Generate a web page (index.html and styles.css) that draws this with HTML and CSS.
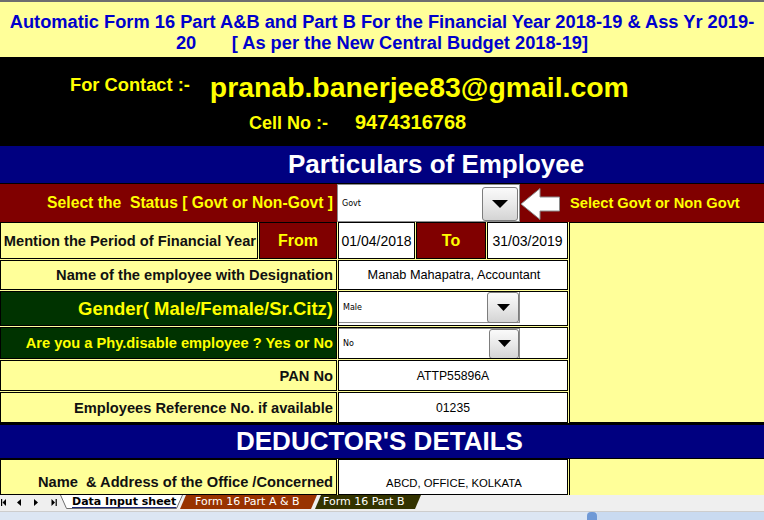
FILE: index.html
```html
<!DOCTYPE html>
<html lang="en">
<head>
<meta charset="utf-8">
<title>Form 16 - Data Input sheet</title>
<link rel="stylesheet" href="styles.css">
</head>
<body>
<div class="sheet">
  <header class="title">Automatic Form 16 Part A&amp;B and Part B For the Financial Year 2018-19 &amp; Ass Yr 2019-
20       [ As per the New Central Budget 2018-19]</header>

  <section class="contact">
    <div class="contact-line contact-line1">
      <span class="c-label">For Contact :-</span>
      <span class="c-email">pranab.banerjee83@gmail.com</span>
    </div>
    <div class="contact-line contact-line2">
      <span class="c-cell">Cell No :-</span>
      <span class="c-phone">9474316768</span>
    </div>
  </section>

  <div class="band band-particulars">Particulars of Employee</div>

  <div class="status-row">
    <div class="status-label">Select the&nbsp; Status [ Govt or Non-Govt ]</div>
    <div class="combo combo-status">
      <span class="combo-text">Govt</span>
      <span class="combo-btn combo-btn-lg"><svg width="16" height="8" viewBox="0 0 16 8"><polygon points="0,0 16,0 8,8" fill="#000"/></svg></span>
    </div>
    <svg class="hint-arrow" width="41" height="34" viewBox="0 0 41 34">
      <polygon points="1,17 20,1.5 20,10 39.5,10 39.5,24 20,24 20,32.5" fill="#fff" stroke="#8a8a8a" stroke-width="1"/>
    </svg>
    <div class="status-hint">Select Govt or Non Govt</div>
  </div>

  <div class="grid">
    <div class="cell lbl period-label">Mention the Period of Financial Year</div>
    <div class="cell maroon-cell">From</div>
    <div class="cell val date-cell">01/04/2018</div>
    <div class="cell maroon-cell">To</div>
    <div class="cell val date-cell">31/03/2019</div>
    <div class="cell side-fill"></div>

    <div class="cell lbl span-label">Name of the employee with Designation</div>
    <div class="cell val span-val name-val">Manab Mahapatra, Accountant</div>

    <div class="cell green-cell span-label gender-label">Gender( Male/Female/Sr.Citz)</div>
    <div class="cell val span-val combo-cell">
      <div class="combo combo-gender">
        <span class="combo-text">Male</span>
        <span class="combo-btn combo-btn-sm"><svg width="13" height="7" viewBox="0 0 13 7"><polygon points="0,0 13,0 6.5,7" fill="#000"/></svg></span>
      </div>
    </div>

    <div class="cell green-cell span-label phy-label">Are you a Phy.disable employee ? Yes or No</div>
    <div class="cell val span-val combo-cell">
      <div class="combo combo-phy">
        <span class="combo-text">No</span>
        <span class="combo-btn combo-btn-sm combo-btn-phy"><svg width="13" height="7" viewBox="0 0 13 7"><polygon points="0,0 13,0 6.5,7" fill="#000"/></svg></span>
      </div>
    </div>

    <div class="cell lbl span-label">PAN No</div>
    <div class="cell val span-val small-val">ATTP55896A</div>

    <div class="cell lbl span-label">Employees Reference No. if available</div>
    <div class="cell val span-val small-val">01235</div>
  </div>

  <div class="band band-deductor">DEDUCTOR'S DETAILS</div>

  <div class="grid grid-deductor">
    <div class="cell lbl span-label bottom-label">Name&nbsp; &amp; Address of the Office /Concerned</div>
    <div class="cell val span-val office-val">ABCD, OFFICE, KOLKATA</div>
    <div class="cell side-fill side-fill-2"></div>
  </div>

  <div class="tabbar">
    <svg class="tabnav" width="60" height="16" viewBox="0 0 60 16">
      <rect x="1" y="5" width="1.2" height="7" fill="#000"/>
      <polygon points="2.5,8.5 6,5 6,12" fill="#000"/>
      <polygon points="17,8.5 21,5 21,12" fill="#000"/>
      <polygon points="38,8.5 34,5 34,12" fill="#000"/>
      <polygon points="55,8.5 51.5,5 51.5,12" fill="#000"/>
      <rect x="55.6" y="5" width="1.2" height="7" fill="#000"/>
    </svg>
    <div class="tab tab-active">
      <svg class="tab-shape" viewBox="0 0 123 14" preserveAspectRatio="none">
        <polygon points="0,0 123,0 117,14 6,14" fill="#fff"/>
        <polyline points="0.5,0 6.5,13.5 116.5,13.5 122.5,0" fill="none" stroke="#6b6b6b" stroke-width="1"/>
      </svg>
      <span class="tab-text">Data Input sheet</span>
    </div>
    <div class="tab tab-brown"><span class="tab-text">Form 16 Part A &amp; B</span></div>
    <div class="tab tab-olive"><span class="tab-text">Form 16 Part B</span></div>
  </div>
  <div class="statusbar">
    <div class="sb-left"></div>
    <div class="sb-bump"></div>
    <div class="sb-right"></div>
  </div>
</div>
</body>
</html>
```

FILE: styles.css
```css
* { box-sizing: border-box; margin: 0; padding: 0; }
html, body { width: 764px; height: 520px; overflow: hidden; background: #fff; }
body { font-family: "Liberation Sans", Arial, sans-serif; }

.sheet { width: 764px; height: 520px; display: flex; flex-direction: column; overflow: hidden; }

.title {
  flex: none; height: 57px;
  border-top: 2px solid #6e6e6e;
  background: #ffff99; color: #0000cc;
  font-weight: bold; font-size: 18.25px; line-height: 21px;
  text-align: center; white-space: pre;
  padding-top: 9px;
}

.contact { flex: none; height: 89px; background: #000; color: #ffff00; font-weight: bold; padding-top: 14px; }
.contact-line { display: flex; }
.contact-line1 { padding-left: 70px; gap: 20px; height: 32px; line-height: 32px; align-items: center; }
.c-label { font-size: 18.3px; line-height: 20px; margin-bottom: 4px; }
.c-email { font-size: 28.4px; }
.contact-line2 { padding-left: 249px; gap: 27px; margin-top: 7px; line-height: 24px; align-items: baseline; }
.c-cell { font-size: 18px; }
.c-phone { font-size: 20px; }

.band { flex: none; background: #000080; color: #fff; font-weight: bold; font-size: 26px; white-space: nowrap; }
.band-particulars { height: 38px; line-height: 37px; border-bottom: 1px solid #000; padding-left: 288px; }
.band-deductor { height: 36px; line-height: 33px; border-top: 2px solid #000; border-bottom: 1px solid #000; padding-left: 236px; }

.status-row { flex: none; height: 38px; background: #800000; display: flex; align-items: flex-start; }
.status-label {
  width: 337px; height: 38px; line-height: 38px; padding-right: 4px;
  text-align: right; color: #ffff00; font-weight: bold; font-size: 15.7px; white-space: nowrap;
}
.combo { display: flex; align-items: center; background: #fff; border: 1px solid #8c8c8c; }
.combo-status { width: 183px; height: 38px; padding-right: 1px; }
.combo-text { font-family: "DejaVu Sans", sans-serif; font-size: 8px; color: #000; padding-left: 4px; }
.combo-btn {
  margin-left: auto; display: flex; align-items: center; justify-content: center;
  border: 1px solid #7d7d7d; border-radius: 3px;
  background: linear-gradient(#fafafa, #e9e9e9 50%, #d4d4d4);
}
.combo-btn-lg { width: 36px; height: 34px; margin-top: 2px; align-self: flex-start; }
.combo-btn-sm { width: 32px; height: 31px; }
.combo-btn-phy { width: 30px; height: 30px; }
.hint-arrow { flex: none; margin-top: 3px; }
.status-hint { margin-left: 9px; line-height: 38px; color: #ffff00; font-weight: bold; font-size: 14.7px; white-space: nowrap; }

.grid {
  flex: none; display: grid;
  grid-template-columns: 258px 78px 77px 70px 81px 1fr;
  grid-template-rows: 37px 30px 35px 32px 31px 31px;
  column-gap: 1px; row-gap: 1px;
  background: #ffff99;
}
.cell { border: 1px solid #000; display: flex; align-items: center; white-space: nowrap; overflow: hidden; }
.lbl { background: #ffff99; justify-content: flex-end; padding-right: 3px; font-weight: bold; font-size: 14.67px; color: #111; }
.period-label { padding-right: 1px; }
.span-label { grid-column: 1 / 3; }
.span-val { grid-column: 3 / 6; }
.maroon-cell { background: #800000; color: #ffff00; font-weight: bold; font-size: 16px; justify-content: center; }
.val { background: #fff; justify-content: center; color: #000; }
.date-cell { font-size: 14px; }
.name-val { font-size: 12.7px; padding-left: 2px; }
.small-val { font-size: 12.2px; }
.side-fill { grid-column: 6; grid-row: 1 / 7; background: #ffff99; border-width: 1px 0 1px 1px; }
.green-cell { background: #003300; color: #ffff00; font-weight: bold; justify-content: flex-end; padding-right: 3px; }
.gender-label { font-size: 18.5px; }
.phy-label { font-size: 14.67px; }
.combo-cell { justify-content: flex-start; align-items: flex-start; }
.combo-gender { width: 182px; height: 32px; margin: -1px 0 0 -1px; }
.combo-phy { width: 182px; height: 31px; margin: 0 0 0 -1px; }

.grid-deductor { grid-template-rows: 36px; }
.bottom-label { align-items: flex-end; padding-bottom: 3px; line-height: 17px; }
.office-val { font-size: 11.3px; align-items: flex-end; padding-bottom: 5px; padding-left: 2px; }
.side-fill-2 { grid-row: 1; border-width: 0 0 0 1px; }

.tabbar {
  flex: none; height: 17px; background: #efefef; border-bottom: 1px solid #cdcdcd;
  display: flex; align-items: flex-start;
  font-family: "DejaVu Sans", sans-serif; font-size: 11px;
}
.tabnav { flex: none; margin-top: -1px; }
.tab { position: relative; height: 14px; display: flex; align-items: center; white-space: nowrap; }
.tab-text { position: relative; line-height: 14px; }
.tab-active { width: 123px; padding-left: 12px; z-index: 3; font-weight: bold; color: #000; }
.tab-active .tab-text { text-decoration: underline; text-decoration-color: #1d2a7a; text-underline-offset: 2px; }
.tab-shape { position: absolute; left: 0; top: 0; width: 100%; height: 100%; }
.tab-brown {
  width: 137px; margin-left: -3px; padding-left: 15px; z-index: 2;
  background: #993300; color: #fff;
  clip-path: polygon(6px 0, 100% 0, calc(100% - 6px) 100%, 0 100%);
}
.tab-olive {
  width: 107px; margin-left: -3px; padding-left: 9px; z-index: 1;
  background: #333300; color: #fff;
  clip-path: polygon(7px 0, 100% 0, calc(100% - 6px) 100%, 1px 100%);
}
.statusbar { flex: none; height: 9px; display: flex; background: #d6e3f4; }
.sb-left { width: 587px; background: #dce6f3; }
.sb-bump { width: 10px; background: #6f99d6; border-top-left-radius: 4px; border-top-right-radius: 4px; }
.sb-right { flex: 1; background: #c9daf0; }
```
